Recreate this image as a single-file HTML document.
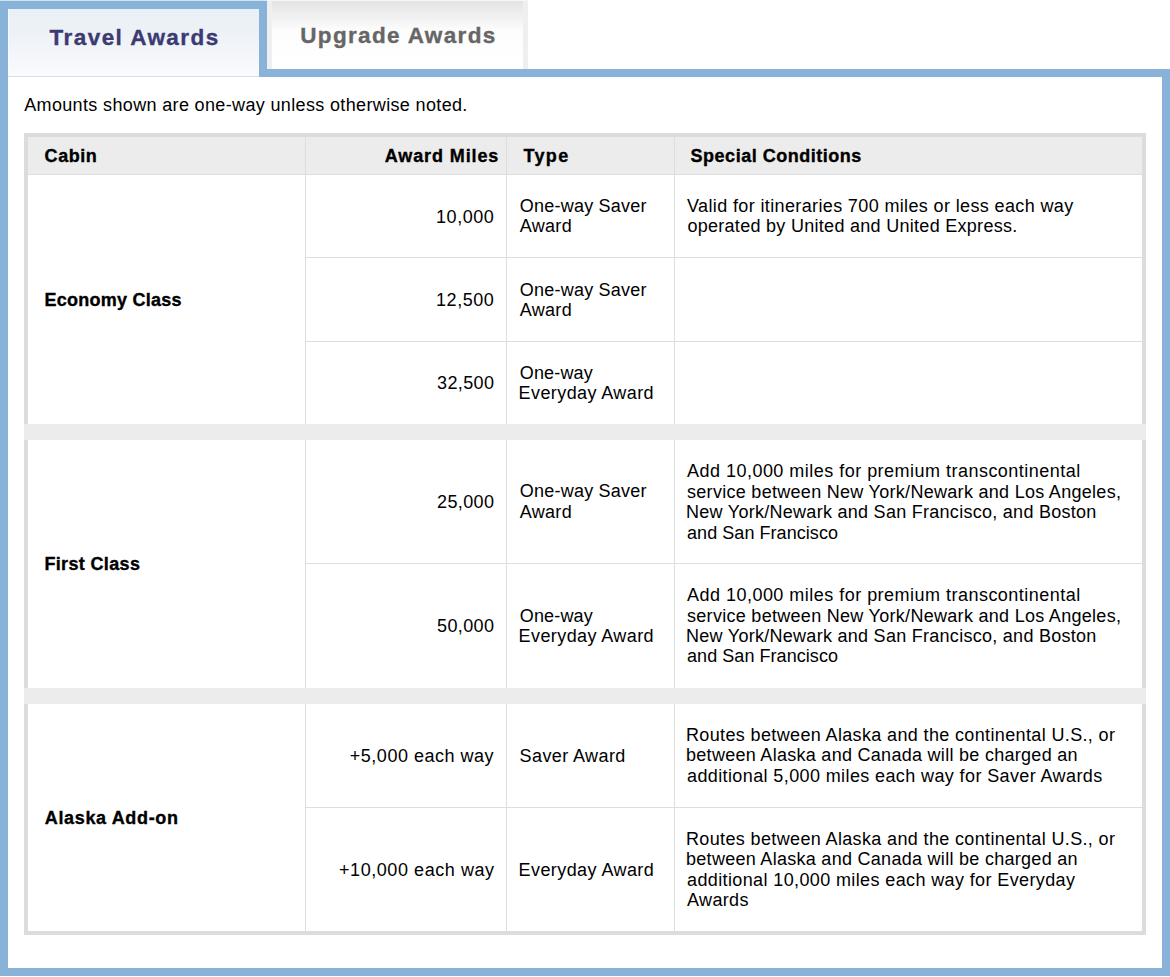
<!DOCTYPE html>
<html><head><meta charset="utf-8">
<style>
html,body{margin:0;padding:0;background:#fff;}
body{width:1170px;height:977px;position:relative;overflow:hidden;font-family:"Liberation Sans",sans-serif;color:#000;}
.a{position:absolute;}
.t{position:absolute;font-size:18px;line-height:20px;white-space:nowrap;}
.b{font-weight:bold;-webkit-text-stroke:0.35px currentColor;}
</style></head><body>
<div class="a" style="left:0;top:69px;width:1170px;height:907px;box-sizing:border-box;border:8px solid #88b2d8;"></div>
<div class="a" style="left:0;top:1px;width:267px;height:76px;background:#88b2d8;"></div>
<div class="a" style="left:0;top:0;width:267px;height:1px;background:#d4e3f1;"></div>
<div class="a" style="left:267px;top:0;width:261px;height:1px;background:#f6f6f6;"></div>
<div class="a" style="left:8px;top:9px;width:251px;height:67px;background:linear-gradient(#e8eff8 0px,#eaf0f6 5px,#ecf1f5 14px,#eef2f7 25px,#f3f6fa 45px,#f8f9fd 60px,#fafbfe 67px);"></div>
<div class="a" style="left:8px;top:9px;width:1px;height:67px;background:rgba(255,255,255,0.5);"></div>
<div class="a" style="left:8px;top:76px;width:251px;height:1px;background:#d3e2f1;"></div>
<div class="a" style="left:267px;top:1px;width:261px;height:68px;box-sizing:border-box;border-left:5px solid #efefef;border-right:5px solid #efefef;background:linear-gradient(#e3e3e3,#fdfdfd 30px,#fff);"></div>
<div class="a" style="left:24px;top:133px;width:1122px;height:802px;box-sizing:border-box;border:4px solid #dcdcdc;"></div>
<div class="a" style="left:28px;top:137px;width:1114px;height:37px;background:#ececec;"></div>
<div class="a" style="left:28px;top:174px;width:1114px;height:1px;background:#dedede;"></div>
<div class="a" style="left:305px;top:137px;width:1px;height:794px;background:#dedede;"></div>
<div class="a" style="left:506px;top:137px;width:1px;height:794px;background:#dedede;"></div>
<div class="a" style="left:674px;top:137px;width:1px;height:794px;background:#dedede;"></div>
<div class="a" style="left:306px;top:257px;width:836px;height:1px;background:#dedede;"></div>
<div class="a" style="left:306px;top:341px;width:836px;height:1px;background:#dedede;"></div>
<div class="a" style="left:306px;top:563px;width:836px;height:1px;background:#dedede;"></div>
<div class="a" style="left:306px;top:807px;width:836px;height:1px;background:#dedede;"></div>
<div class="a" style="left:24px;top:424px;width:1122px;height:16px;background:#ececec;"></div>
<div class="a" style="left:24px;top:688px;width:1122px;height:16px;background:#ececec;"></div>
<div class="t b" style="left:49.60px;top:28.00px;letter-spacing:1.440px;font-size:22.5px;color:#3b3a73;">Travel Awards</div>
<div class="t b" style="left:300.20px;top:26.00px;letter-spacing:1.351px;font-size:22.5px;color:#666666;">Upgrade Awards</div>
<div class="t" style="left:24.20px;top:95.00px;letter-spacing:0.353px;">Amounts shown are one-way unless otherwise noted.</div>
<div class="t b" style="left:44.60px;top:146.00px;letter-spacing:0.540px;">Cabin</div>
<div class="t b" style="left:384.80px;top:146.00px;letter-spacing:0.880px;">Award Miles</div>
<div class="t b" style="left:523.40px;top:146.00px;letter-spacing:1.393px;">Type</div>
<div class="t b" style="left:690.60px;top:146.00px;letter-spacing:0.505px;">Special Conditions</div>
<div class="t" style="left:436.00px;top:207.00px;letter-spacing:0.556px;">10,000</div>
<div class="t" style="left:519.80px;top:196.00px;letter-spacing:0.223px;">One-way Saver</div>
<div class="t" style="left:519.80px;top:216.00px;letter-spacing:0.290px;">Award</div>
<div class="t" style="left:687.00px;top:196.00px;letter-spacing:0.370px;">Valid for itineraries 700 miles or less each way</div>
<div class="t" style="left:687.40px;top:216.00px;letter-spacing:0.289px;">operated by United and United Express.</div>
<div class="t b" style="left:44.40px;top:290.00px;letter-spacing:0.253px;">Economy Class</div>
<div class="t" style="left:436.00px;top:290.00px;letter-spacing:0.556px;">12,500</div>
<div class="t" style="left:519.80px;top:280.00px;letter-spacing:0.223px;">One-way Saver</div>
<div class="t" style="left:519.80px;top:300.00px;letter-spacing:0.290px;">Award</div>
<div class="t" style="left:437.00px;top:373.00px;letter-spacing:0.396px;">32,500</div>
<div class="t" style="left:519.80px;top:363.00px;letter-spacing:0.147px;">One-way</div>
<div class="t" style="left:518.60px;top:383.00px;letter-spacing:0.405px;">Everyday Award</div>
<div class="t" style="left:437.00px;top:492.00px;letter-spacing:0.396px;">25,000</div>
<div class="t" style="left:519.80px;top:481.00px;letter-spacing:0.223px;">One-way Saver</div>
<div class="t" style="left:519.80px;top:502.00px;letter-spacing:0.290px;">Award</div>
<div class="t" style="left:687.00px;top:461.00px;letter-spacing:0.478px;">Add 10,000 miles for premium transcontinental</div>
<div class="t" style="left:687.00px;top:482.00px;letter-spacing:0.292px;">service between New York/Newark and Los Angeles,</div>
<div class="t" style="left:686.00px;top:502.00px;letter-spacing:0.276px;">New York/Newark and San Francisco, and Boston</div>
<div class="t" style="left:687.00px;top:523.00px;letter-spacing:0.057px;">and San Francisco</div>
<div class="t b" style="left:44.40px;top:554.00px;letter-spacing:0.348px;">First Class</div>
<div class="t" style="left:437.00px;top:616.00px;letter-spacing:0.396px;">50,000</div>
<div class="t" style="left:519.80px;top:606.00px;letter-spacing:0.147px;">One-way</div>
<div class="t" style="left:518.60px;top:626.00px;letter-spacing:0.405px;">Everyday Award</div>
<div class="t" style="left:687.00px;top:585.00px;letter-spacing:0.478px;">Add 10,000 miles for premium transcontinental</div>
<div class="t" style="left:687.00px;top:606.00px;letter-spacing:0.292px;">service between New York/Newark and Los Angeles,</div>
<div class="t" style="left:686.00px;top:626.00px;letter-spacing:0.276px;">New York/Newark and San Francisco, and Boston</div>
<div class="t" style="left:687.00px;top:646.00px;letter-spacing:0.057px;">and San Francisco</div>
<div class="t" style="left:349.80px;top:746.00px;letter-spacing:0.514px;">+5,000 each way</div>
<div class="t" style="left:519.60px;top:746.00px;letter-spacing:0.396px;">Saver Award</div>
<div class="t" style="left:686.00px;top:725.00px;letter-spacing:0.361px;">Routes between Alaska and the continental U.S., or</div>
<div class="t" style="left:686.00px;top:745.00px;letter-spacing:0.285px;">between Alaska and Canada will be charged an</div>
<div class="t" style="left:687.00px;top:766.00px;letter-spacing:0.389px;">additional 5,000 miles each way for Saver Awards</div>
<div class="t b" style="left:44.80px;top:808.00px;letter-spacing:0.647px;">Alaska Add-on</div>
<div class="t" style="left:339.00px;top:860.00px;letter-spacing:0.561px;">+10,000 each way</div>
<div class="t" style="left:518.60px;top:860.00px;letter-spacing:0.417px;">Everyday Award</div>
<div class="t" style="left:686.00px;top:829.00px;letter-spacing:0.361px;">Routes between Alaska and the continental U.S., or</div>
<div class="t" style="left:686.00px;top:849.00px;letter-spacing:0.285px;">between Alaska and Canada will be charged an</div>
<div class="t" style="left:687.00px;top:870.00px;letter-spacing:0.381px;">additional 10,000 miles each way for Everyday</div>
<div class="t" style="left:687.00px;top:890.00px;letter-spacing:0.348px;">Awards</div>
</body></html>
